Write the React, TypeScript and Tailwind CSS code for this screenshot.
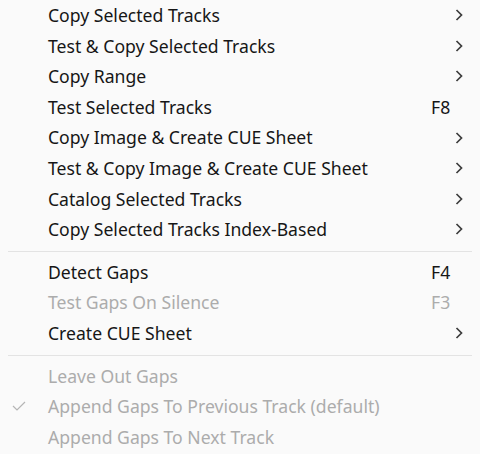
type Item = {
  label: string;
  shortcut?: string;
  submenu?: boolean;
  disabled?: boolean;
  checked?: boolean;
};

const groups: Item[][] = [
  [
    { label: 'Copy Selected Tracks', submenu: true },
    { label: 'Test & Copy Selected Tracks', submenu: true },
    { label: 'Copy Range', submenu: true },
    { label: 'Test Selected Tracks', shortcut: 'F8' },
    { label: 'Copy Image & Create CUE Sheet', submenu: true },
    { label: 'Test & Copy Image & Create CUE Sheet', submenu: true },
    { label: 'Catalog Selected Tracks', submenu: true },
    { label: 'Copy Selected Tracks Index-Based', submenu: true },
  ],
  [
    { label: 'Detect Gaps', shortcut: 'F4' },
    { label: 'Test Gaps On Silence', shortcut: 'F3', disabled: true },
    { label: 'Create CUE Sheet', submenu: true },
  ],
  [
    { label: 'Leave Out Gaps', disabled: true },
    { label: 'Append Gaps To Previous Track (default)', disabled: true, checked: true },
    { label: 'Append Gaps To Next Track', disabled: true },
  ],
];

function Chevron() {
  return (
    <svg width="8" height="12" viewBox="0 0 8 12" fill="none">
      <path d="M1.5 1 L6.5 6 L1.5 11" stroke="#3c3c3c" strokeWidth="1.7" />
    </svg>
  );
}

function Check() {
  return (
    <svg width="14" height="10" viewBox="0 0 14 10" fill="none">
      <path d="M1 5 L5 9 L13 1" stroke="#b5b5b5" strokeWidth="1.2" />
    </svg>
  );
}

function MenuRow({ item }: { item: Item }) {
  return (
    <div
      className={`flex h-[30.6px] items-center ${
        item.disabled ? 'text-[#acacac]' : 'text-[#161616]'
      }`}
    >
      <div className="flex w-[48px] shrink-0 items-center justify-center pr-[10px]">
        {item.checked && <Check />}
      </div>
      <span className="flex-1 whitespace-nowrap">{item.label}</span>
      <span className="w-[24px] shrink-0 text-left">{item.shortcut}</span>
      <div className="flex w-[25px] shrink-0 items-center justify-start">
        {item.submenu && <Chevron />}
      </div>
    </div>
  );
}

export default function App() {
  return (
    <div
      className="h-[454px] w-[480px] overflow-hidden bg-[#fafafa] text-[17.6px]"
      style={{ fontFamily: '"Noto Sans", "Open Sans", sans-serif' }}
    >
      {groups.map((group, i) => (
        <div key={i}>
          {i > 0 && (
            <div className="px-[8px] pt-[6px] pb-[5px]">
              <div className="h-px bg-[#e3e3e3]" />
            </div>
          )}
          {group.map((item) => (
            <MenuRow key={item.label} item={item} />
          ))}
        </div>
      ))}
    </div>
  );
}
